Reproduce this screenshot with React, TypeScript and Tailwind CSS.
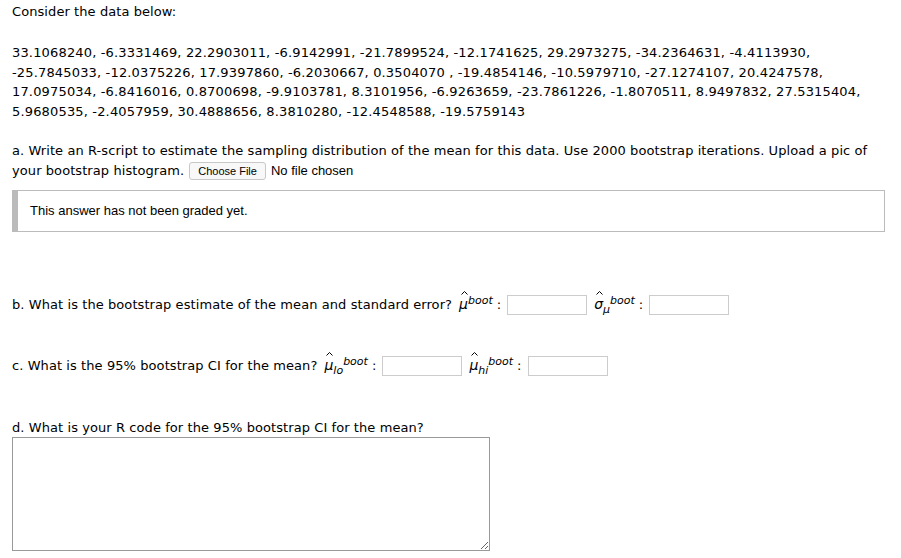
import React from "react";

const data = [
  "33.1068240, -6.3331469, 22.2903011, -6.9142991, -21.7899524, -12.1741625, 29.2973275, -34.2364631, -4.4113930,",
  "-25.7845033, -12.0375226, 17.9397860, -6.2030667, 0.3504070 , -19.4854146, -10.5979710, -27.1274107, 20.4247578,",
  "17.0975034, -6.8416016, 0.8700698, -9.9103781, 8.3101956, -6.9263659, -23.7861226, -1.8070511, 8.9497832, 27.5315404,",
  "5.9680535, -2.4057959, 30.4888656, 8.3810280, -12.4548588, -19.5759143",
];

// hatted greek letter with optional subscript, then "boot" superscript
const Sym = ({ base, sub }: { base: string; sub?: string }) => (
  <span className="inline-flex items-baseline ml-[7px] mr-[4px] italic tracking-normal">
    <span className="relative text-[14px]">
      {base}
      <svg className="absolute left-[2px] -top-[3px]" width="7" height="4" viewBox="0 0 7 4">
        <polyline points="0.5,3.5 3.5,0.5 6.5,3.5" fill="none" stroke="#000" strokeWidth="1" />
      </svg>
    </span>
    {sub && <span className="relative top-[4px] text-[11px]">{sub}</span>}
    <span className="relative -top-[5px] text-[11px]">boot</span>
  </span>
);

const Box = () => <input type="text" className="w-[80px] h-[20px] border border-[#ccc] bg-white outline-none" />;

export default function App() {
  return (
    <div className="w-[901px] h-[558px] bg-white text-[#000] font-['Verdana','DejaVu_Sans',sans-serif] text-[13px] leading-[20px] tracking-[0.08px] pl-[12px] pr-[16px] pt-[2px]">
      <p>Consider the data below:</p>
      <div className="mt-[21px] leading-[19.5px] tracking-[0.16px]">
        {data.map((l, i) => (
          <div key={i} className="whitespace-nowrap">{l}</div>
        ))}
      </div>

      <p className="mt-[20px]">
        a. Write an R-script to estimate the sampling distribution of the mean for this data. Use 2000 bootstrap iterations. Upload a pic of
      </p>
      <div className="flex items-center">
        <span>your bootstrap histogram.</span>
        <button className="ml-[5px] h-[18px] px-[8px] border border-[#c8c8c8] rounded-[3px] bg-[#f8f8f8] text-[11px] leading-[16px] tracking-normal font-['Liberation_Sans',Arial,sans-serif]">
          Choose File
        </button>
        <span className="ml-[5px] text-[13px] tracking-normal font-['Liberation_Sans',Arial,sans-serif]">No file chosen</span>
      </div>

      <div className="mt-[9px] h-[42px] border border-[#bbb] border-l-[6px] flex items-center pl-[12px] text-[13px] tracking-normal font-['Liberation_Sans',Arial,sans-serif]">
        This answer has not been graded yet.
      </div>

      <div className="mt-[62px] flex items-center">
        <span>b. What is the bootstrap estimate of the mean and standard error?</span>
        <Sym base="μ" />
        <span className="mr-[6px]">:</span>
        <Box />
        <Sym base="σ" sub="μ" />
        <span className="mr-[6px]">:</span>
        <Box />
      </div>

      <div className="mt-[39px] flex items-center">
        <span>c. What is the 95% bootstrap CI for the mean?</span>
        <Sym base="μ" sub="lo" />
        <span className="mr-[6px]">:</span>
        <Box />
        <Sym base="μ" sub="hi" />
        <span className="mr-[6px]">:</span>
        <Box />
      </div>

      <p className="mt-[42px] leading-[18px]">d. What is your R code for the 95% bootstrap CI for the mean?</p>
      <textarea className="block w-[478px] h-[114px] border border-[#999] resize-y outline-none" />
    </div>
  );
}
